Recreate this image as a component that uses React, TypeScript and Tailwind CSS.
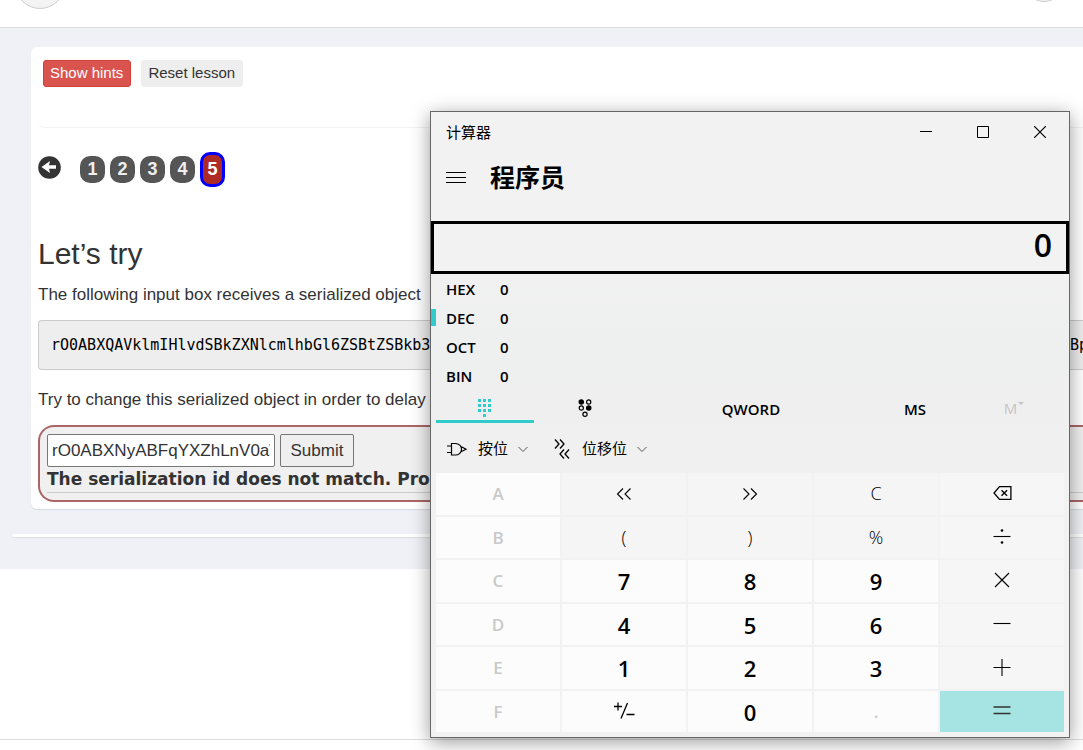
import { FC, ReactNode } from "react";
import { clsx } from "clsx";

type Key = {
  label: string;
  face: ReactNode;
  kind: "letter" | "digit" | "action" | "operator" | "equals" | "sign" | "dot";
};

const Glyph: FC<{ d: string; size?: number; width?: number }> = ({
  d,
  size = 20,
  width = 1.1,
}) => (
  <svg
    width={size}
    height={size}
    viewBox={`0 0 ${size} ${size}`}
    fill="none"
    stroke="currentColor"
    strokeWidth={width}
    aria-hidden="true"
  >
    <path d={d} />
  </svg>
);

const Divide = () => (
  <svg width="20" height="20" viewBox="0 0 20 20" aria-hidden="true">
    <path d="M1.5 10.5h17" stroke="currentColor" strokeWidth="1.1" />
    <circle cx="10" cy="4.5" r="1.3" fill="currentColor" />
    <circle cx="10" cy="16.5" r="1.3" fill="currentColor" />
  </svg>
);

const letter = (label: string): Key => ({ label, face: label, kind: "letter" });
const digit = (label: string): Key => ({ label, face: label, kind: "digit" });

const keys: Key[] = [
  letter("A"),
  {
    label: "Left shift",
    face: <Glyph d="M9 4.5 3.5 10 9 15.5M16.5 4.5 11 10l5.5 5.5" />,
    kind: "action",
  },
  {
    label: "Right shift",
    face: <Glyph d="M3.5 4.5 9 10l-5.5 5.5M11 4.5l5.5 5.5-5.5 5.5" />,
    kind: "action",
  },
  { label: "Clear", face: "C", kind: "action" },
  {
    label: "Backspace",
    face: (
      <Glyph
        width={1.3}
        d="M7.5 3.6h11.4v12.8H7.5L2 10zM9.5 7.2l5.6 5.6M15.1 7.2l-5.6 5.6"
      />
    ),
    kind: "operator",
  },
  letter("B"),
  { label: "Open parenthesis", face: "(", kind: "action" },
  { label: "Close parenthesis", face: ")", kind: "action" },
  { label: "Percent", face: "%", kind: "action" },
  { label: "Divide", face: <Divide />, kind: "operator" },
  letter("C"),
  digit("7"),
  digit("8"),
  digit("9"),
  { label: "Multiply", face: <Glyph d="M3 3 17 17M17 3 3 17" />, kind: "operator" },
  letter("D"),
  digit("4"),
  digit("5"),
  digit("6"),
  { label: "Minus", face: <Glyph d="M1.5 10.5h17" />, kind: "operator" },
  letter("E"),
  digit("1"),
  digit("2"),
  digit("3"),
  { label: "Plus", face: <Glyph d="M1.5 10.5h17M10 2v17" />, kind: "operator" },
  letter("F"),
  {
    label: "Negate",
    face: (
      <Glyph size={22} width={1.3} d="M1 6.5h8M5 2.5v8M14.5 3 8 18.5M13.5 14.5h8" />
    ),
    kind: "sign",
  },
  digit("0"),
  { label: "Decimal point", face: ".", kind: "dot" },
  {
    label: "Equals",
    face: <Glyph width={1.4} d="M1.5 7h17M1.5 13.5h17" />,
    kind: "equals",
  },
];

const keyStyles: Record<Key["kind"], string> = {
  letter: "bg-[#fcfcfc] text-[17px] font-semibold text-[#c9c9c9]",
  digit: "bg-[#fcfcfc] text-[22px] font-semibold pt-[2px]",
  action: "bg-[#f5f5f6] text-[18px] font-light",
  operator: "bg-[#f6f6f7] pb-[2px]",
  equals: "bg-[#a5e4e2] text-[#333] pb-[2px]",
  sign: "bg-[#fcfcfc]",
  dot: "bg-[#fcfcfc] text-[17px] font-semibold text-[#c9c9c9]",
};

const radixes = ["HEX", "DEC", "OCT", "BIN"];

const Chevron = () => (
  <svg
    width="10"
    height="10"
    viewBox="0 0 10 10"
    fill="none"
    stroke="#555"
    aria-hidden="true"
  >
    <path d="M.5 3 5 7.5 9.5 3" />
  </svg>
);

const KeypadIcon = () => (
  <svg width="16" height="18" viewBox="0 0 16 18" fill="#30cccc" aria-hidden="true">
    {[0, 5, 10].map((y) =>
      [1, 6, 11].map((x) => <rect key={`${x}-${y}`} x={x} y={y} width="3" height="3" />)
    )}
    <rect x="6" y="15" width="3" height="3" />
  </svg>
);

const BitsIcon = () => (
  <svg
    width="16"
    height="18"
    viewBox="0 0 16 18"
    fill="none"
    stroke="#000"
    strokeWidth="1.2"
    aria-hidden="true"
  >
    <circle cx="4.3" cy="3" r="2.2" fill="#000" />
    <circle cx="11.7" cy="3" r="2.1" />
    <circle cx="4.3" cy="9" r="2.1" />
    <circle cx="11.7" cy="9" r="2.2" fill="#000" />
    <circle cx="8" cy="15.2" r="2.1" />
  </svg>
);

const Calculator: FC = () => (
  <section
    aria-label="计算器"
    className="absolute top-[111px] right-[13px] w-[640px] border border-[#666] bg-[#f2f2f2] font-['Open_Sans','Noto_Sans_CJK_SC',sans-serif] text-black shadow-[0_4px_18px_rgba(0,0,0,0.4)]"
  >
    <div className="flex h-10 items-center justify-between pr-px pl-[15px]">
      <span className="text-[15px]">计算器</span>
      <div className="flex">
        <button type="button" aria-label="Minimize" className="flex w-[57px] justify-center">
          <Glyph size={12} width={1} d="M0 5.5h12" />
        </button>
        <button type="button" aria-label="Maximize" className="flex w-[57px] justify-center">
          <Glyph size={12} width={1} d="M.5.5h11v11H.5z" />
        </button>
        <button type="button" aria-label="Close" className="flex w-[57px] justify-center">
          <Glyph size={12} width={1.2} d="M0 0 12 12M12 0 0 12" />
        </button>
      </div>
    </div>

    <div className="flex h-[69px] items-start gap-6 pl-[15px]">
      <button type="button" aria-label="Menu" className="mt-4">
        <Glyph width={1} d="M0 4.5h20M0 9.5h20M0 14.5h20" />
      </button>
      <h1 className="mt-[9px] text-[25px] leading-8 font-bold">程序员</h1>
    </div>

    <output className="flex h-[53px] items-center justify-end border-3 border-black pr-[14px] pb-[6px] text-[32px] leading-10 font-semibold">
      0
    </output>

    <div className="bg-linear-to-b from-[#f1f1f1] via-[#eeefef] to-[#f0efef]">
      {radixes.map((name) => (
        <button
          key={name}
          type="button"
          className="flex h-[29px] w-full items-center text-left text-[15px] leading-5 font-semibold"
        >
          <span
            className={clsx("mr-[10px] h-[17px] w-[5px]", name === "DEC" && "bg-[#30cccc]")}
          />
          <span className="w-[54px]">{name}</span>
          <span>0</span>
        </button>
      ))}

      <div className="grid h-[33px] grid-cols-[98fr_102fr_230fr_98fr_100fr] px-[5px] text-[15px] font-semibold">
        <button
          type="button"
          aria-label="Full keypad"
          className="flex items-center justify-center border-b-3 border-[#30cccc] pt-[6px]"
        >
          <KeypadIcon />
        </button>
        <button type="button" aria-label="Bit keypad" className="flex items-center justify-center pt-[3px]">
          <BitsIcon />
        </button>
        <button type="button" className="pt-[5px]">
          QWORD
        </button>
        <button type="button" className="pt-[5px]">
          MS
        </button>
        <button
          type="button"
          disabled
          aria-label="Memory"
          className="flex items-center justify-center gap-px pt-[3px] font-normal text-[#c4c4c4]"
        >
          M
          <svg width="6" height="12" viewBox="0 0 6 12" fill="currentColor" aria-hidden="true">
            <path d="M0 0h6L3 3z" />
          </svg>
        </button>
      </div>
    </div>

    <div className="flex h-[50px] items-center gap-6 bg-[#f1f0f0] pt-px pl-[15px] text-[15px]">
      <button type="button" className="flex items-center gap-[10px]">
        <Glyph
          size={22}
          width={1.2}
          d="M1 8h4.5M1 14.5h4.5M5.5 5.5h4a6 5.7 0 0 1 0 11.500h-4zM15.5 8.8 20 11.2l-4.5 2.3"
        />
        按位
        <Chevron />
      </button>
      <button type="button" className="flex items-center gap-[10px]">
        <Glyph
          size={20}
          width={1.3}
          d="M3 .5 7 5 3 9.5M8 .5 12 5 8 9.5M12 10.5 8 15l4 4.5M17 10.5 13 15l4 4.5"
        />
        位移位
        <Chevron />
      </button>
    </div>

    <div className="grid h-[264px] grid-cols-5 grid-rows-6 gap-[2px] px-[5px] pb-[5px]">
      {keys.map((key) => (
        <button
          key={key.label}
          type="button"
          aria-label={key.label}
          disabled={key.kind === "letter" || key.kind === "dot"}
          className={clsx("flex items-center justify-center", keyStyles[key.kind])}
        >
          {key.face}
        </button>
      ))}
    </div>
  </section>
);

const Lesson: FC = () => (
  <div className="ml-[31px] overflow-hidden rounded-l-md bg-white pb-[7px] pl-[7px] shadow-[0_1px_1px_rgba(0,0,0,0.1)]">
    <div className="flex h-[81px] items-start gap-[10px] rounded-bl-md border-b border-[#f3f3f3] px-[5px] pt-[13px] text-[15px] leading-6">
      <button
        type="button"
        className="rounded-[3px] border border-[#d43f3a] bg-[#d9534f] pr-[7px] pb-px pl-[6px] text-white"
      >
        Show hints
      </button>
      <button
        type="button"
        className="rounded-[3px] border border-[#eee] bg-[#eee] pr-[7px] pb-px pl-[6px]"
      >
        Reset lesson
      </button>
    </div>

    <nav className="mt-6 flex h-[35px] items-center gap-[5px] text-[18px] leading-[27px] font-bold text-white">
      <a href="#4" aria-label="Previous page" className="mr-[14px] mb-[5px]">
        <svg width="23" height="23" viewBox="0 0 23 23" aria-hidden="true">
          <circle cx="11.5" cy="11.5" r="11.3" fill="#333" />
          <path d="M3.5 11 12 5l-1 4.2h7v3.6h-7l1 4.2z" fill="#fff" />
        </svg>
      </a>
      {["1", "2", "3", "4"].map((page) => (
        <a
          key={page}
          href={`#${page}`}
          className="w-[25px] rounded-[10px] bg-[#555] text-center text-[#eee]"
        >
          {page}
        </a>
      ))}
      <a
        href="#5"
        aria-current="page"
        className="w-[25px] rounded-[10px] border-3 border-[#00f] bg-[#ad2a26] text-center leading-[29px]"
      >
        5
      </a>
    </nav>

    <h2 className="mt-[50px] text-[30px] leading-[33px]">Let’s try</h2>
    <p className="mt-3 text-[17px] leading-[26px]">
      The following input box receives a serialized object
    </p>
    <pre className="mt-3 flex justify-between rounded-l-[4px] border border-r-0 border-[#ccc] bg-[#eee] py-[11px] pl-3 font-['DejaVu_Sans_Mono',monospace] text-[15px] leading-[26px] text-black">
      <span>rO0ABXQAVklmIHlvdSBkZXNlcmlhbGl6ZSBtZSBkb3</span>
      <span className="w-[13px] overflow-hidden">Bp</span>
    </pre>
    <p className="mt-[17px] text-[17px] leading-[26px]">
      Try to change this serialized object in order to delay
    </p>

    <form
      className="mt-3 rounded-l-2xl border-2 border-r-0 border-[#a66] bg-[#f0f0f0] pt-[7px] pb-[7px] pl-[7px] text-[17px]"
      onSubmit={(e) => e.preventDefault()}
    >
      <div className="flex gap-[5px]">
        <input
          type="text"
          aria-label="Token"
          defaultValue="rO0ABXNyABFqYXZhLnV0aWwuSGFzaFNldLpEhZWWuLc0"
          className="h-[33px] w-[228px] rounded-[2px] border border-[#767676] bg-white px-1"
        />
        <button
          type="submit"
          className="h-[33px] w-[74px] rounded-[2px] border border-[#767676] bg-[#efefef]"
        >
          Submit
        </button>
      </div>
      <p className="border-b border-[#ccc] font-['DejaVu_Sans',sans-serif] leading-[25px] font-bold">
        The serialization id does not match. Pro
      </p>
    </form>
  </div>
);

const App: FC = () => (
  <div className="relative overflow-hidden bg-white font-['Liberation_Sans',Arial,sans-serif] text-[#333]">
    <header className="flex h-7 items-start justify-between overflow-hidden border-b border-[#ddd] pr-[19px] pl-[15px]">
      <span className="-mt-[41px] size-[50px] rounded-full border border-[#ccc] bg-[#f3f3f3]" />
      <span className="-mt-[38px] size-10 rounded-full border border-[#ccc] bg-[#f3f3f3]" />
    </header>
    <main className="bg-[#f0f1f6] pt-[19px] pb-8">
      <Lesson />
      <hr className="mt-[25px] ml-3 h-[3px] rounded-l-xs border-0 bg-white shadow-[0_1px_1px_rgba(0,0,0,0.08)]" />
    </main>
    <footer className="pt-[170px]">
      <div className="h-[11px] border-t border-[#ddd]" />
    </footer>
    <Calculator />
  </div>
);

export default App;
